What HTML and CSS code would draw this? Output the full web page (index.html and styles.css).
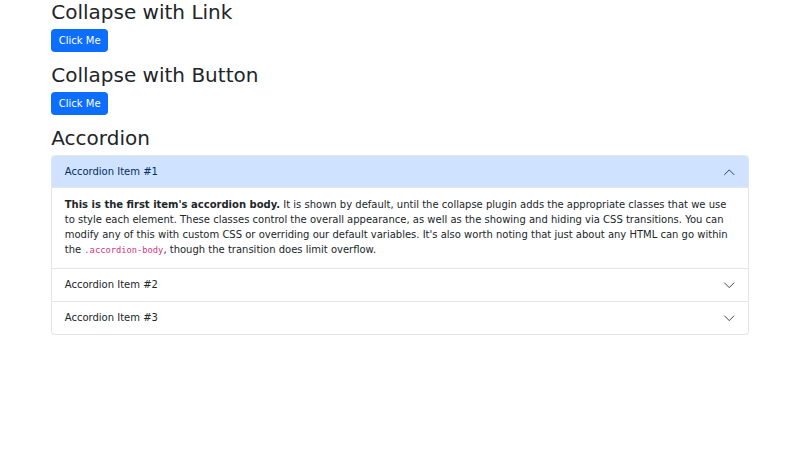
FILE: index.html
```html
<!DOCTYPE html>
<html lang="en">
<head>
<meta charset="utf-8">
<title>Collapse</title>
<link rel="stylesheet" href="styles.css">
</head>
<body>
<div class="container">
  <h2 class="title">Collapse with Link</h2>
  <div class="actions"><a class="btn" href="#">Click Me</a></div>

  <h2 class="title">Collapse with Button</h2>
  <div class="actions"><button class="btn" type="button">Click Me</button></div>

  <h2 class="title">Accordion</h2>
  <div class="accordion">
    <div class="acc-item">
      <div class="acc-header active">
        <span>Accordion Item #1</span>
        <svg class="chev up" viewBox="0 0 16 16" fill="none" stroke-linecap="round" stroke-linejoin="round"><path d="M2 5L8 11L14 5"/></svg>
      </div>
      <div class="acc-body">
        <strong>This is the first item's accordion body.</strong> It is shown by default, until the collapse plugin adds the appropriate classes that we use to style each element. These classes control the overall appearance, as well as the showing and hiding via CSS transitions. You can modify any of this with custom CSS or overriding our default variables. It's also worth noting that just about any HTML can go within the <code>.accordion-body</code>, though the transition does limit overflow.
      </div>
    </div>
    <div class="acc-item">
      <div class="acc-header">
        <span>Accordion Item #2</span>
        <svg class="chev" viewBox="0 0 16 16" fill="none" stroke-linecap="round" stroke-linejoin="round"><path d="M2 5L8 11L14 5"/></svg>
      </div>
    </div>
    <div class="acc-item">
      <div class="acc-header">
        <span>Accordion Item #3</span>
        <svg class="chev" viewBox="0 0 16 16" fill="none" stroke-linecap="round" stroke-linejoin="round"><path d="M2 5L8 11L14 5"/></svg>
      </div>
    </div>
  </div>
</div>
</body>
</html>
```
FILE: styles.css
```css
html, body {
  margin: 0;
  padding: 0;
  background: #fff;
}
body {
  font-family: "DejaVu Sans", sans-serif;
  font-size: 10px;
  line-height: 15px;
  color: #212529;
}
.container {
  width: 697.5px;
  margin: 0 auto;
}
.title {
  margin: 0 0 5px;
  font-size: 20px;
  line-height: 24px;
  font-weight: 500;
  color: #212529;
}
.actions {
  display: flex;
  margin-bottom: 11px;
}
.btn {
  display: inline-block;
  font-family: inherit;
  font-size: 10px;
  line-height: 15px;
  padding: 4px 7.5px;
  border: 0;
  border-radius: 4px;
  background: #0d6efd;
  color: #fff;
  text-decoration: none;
  cursor: pointer;
}
.acc-item {
  border: 1px solid #e4e7ea;
  border-top: 0;
  background: #fff;
}
.acc-item:first-child {
  border-top: 1px solid #e4e7ea;
  border-radius: 4px 4px 0 0;
  overflow: hidden;
}
.acc-item:last-child {
  border-radius: 0 0 4px 4px;
}
.acc-header {
  display: flex;
  align-items: center;
  padding: 10px 12.5px 9.5px;
  line-height: 12px;
  font-size: 10px;
  color: #212529;
}
.acc-header.active {
  background: #cfe2ff;
  color: #052c65;
  box-shadow: inset 0 -1px 0 #e4e7ea;
}
.chev {
  margin-left: auto;
  width: 12.5px;
  height: 12.5px;
  stroke: #212529;
  stroke-width: 1.1;
}
.chev.up {
  transform: rotate(-180deg);
  stroke: #052c65;
}
.acc-body {
  padding: 9px 12.5px 11px;
}
.acc-body strong {
  font-weight: bold;
}
code {
  font-family: "DejaVu Sans Mono", monospace;
  font-size: 8.75px;
  line-height: 1;
  color: #d63384;
}
```
